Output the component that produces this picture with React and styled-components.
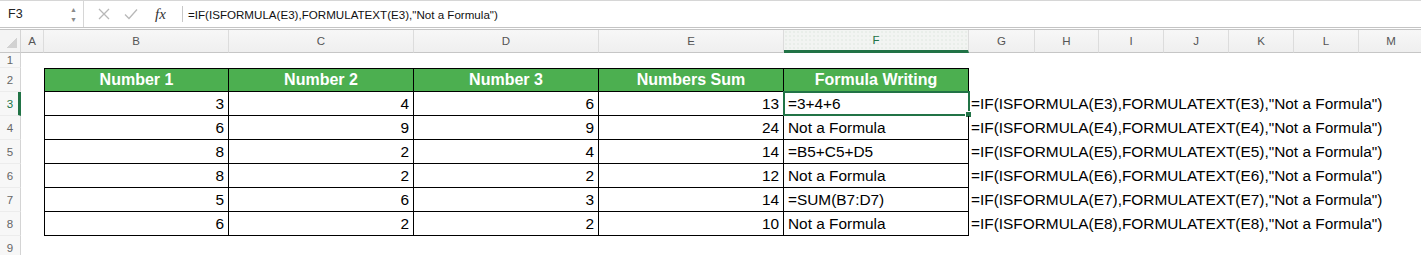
import React from 'react';
import styled, { createGlobalStyle, css } from 'styled-components';

const GlobalStyle = createGlobalStyle`
  html, body { margin: 0; padding: 0; background: #fff; }
  body { font-family: "Liberation Sans", Arial, sans-serif; overflow: hidden; }
`;

const GREEN = '#4caf50';
const SEL = '#217346';

const Page = styled.div`
  width: 1421px;
  height: 255px;
  overflow: hidden;
  background: #fff;
`;

const FormulaBar = styled.div`
  height: 30px;
  display: flex;
  align-items: center;
  border-top: 1px solid #d6d6d6;
  border-bottom: 3px double #c4c4c4;
  background: #fff;
  box-sizing: border-box;
`;

const NameBox = styled.div`
  width: 84px;
  height: 100%;
  display: flex;
  align-items: center;
  justify-content: space-between;
  padding: 0 6px 0 8px;
  box-sizing: border-box;
  border-right: 1px solid #d6d6d6;
  font-size: 12.5px;
  color: #222;
`;

const Stepper = styled.div`
  display: flex;
  flex-direction: column;
  gap: 3px;
  color: #8a8a8a;
  font-size: 7px;
  line-height: 7px;
`;

const Actions = styled.div`
  width: 98px;
  height: 100%;
  display: flex;
  align-items: center;
  padding-left: 14px;
  gap: 14px;
  box-sizing: border-box;
`;

const Fx = styled.span`
  font-family: "Liberation Serif", "Times New Roman", serif;
  font-style: italic;
  font-size: 15px;
  color: #333;
  margin-left: 3px;
`;

const Divider = styled.div`
  width: 1px;
  height: 16px;
  background: #c8c8c8;
`;

const FormulaText = styled.div`
  padding-left: 5px;
  font-size: 11.6px;
  color: #111;
  white-space: nowrap;
`;

const Sheet = styled.div`
  display: grid;
  grid-template-columns: 21px 23px 185px 185px 185px 185px 185px 66px 64px 65px 65px 65px 65px 65px;
  grid-template-rows: 23px 15px repeat(7, 24px) 24px;
`;

const Corner = styled.div`
  background:
    linear-gradient(135deg, transparent 55%, #d2d2d2 55%) no-repeat 5px 6px / 12px 12px,
    #f4f4f4;
  border-right: 1px solid #d4d4d4;
  border-bottom: 1px solid #c6c6c6;
  box-sizing: border-box;
`;

const ColHead = styled.div`
  display: flex;
  align-items: center;
  justify-content: center;
  font-size: 11.5px;
  color: #555;
  background: linear-gradient(#f7f7f7, #efefef);
  border-right: 1px solid #dcdcdc;
  border-bottom: 1px solid #c6c6c6;
  box-sizing: border-box;
  ${p => p.active && css`
    color: ${SEL};
    background: radial-gradient(#dde6de 0.6px, transparent 0.8px) 0 0 / 4px 4px, #f2f4f2;
    border-bottom: 3px solid ${SEL};
  `}
`;

const RowHead = styled.div`
  display: flex;
  align-items: center;
  justify-content: center;
  font-size: 11.5px;
  color: #666;
  background: #f7f7f7;
  border-right: 1px solid #d4d4d4;
  border-bottom: 1px solid #ececec;
  box-sizing: border-box;
  ${p => p.active && css`
    color: ${SEL};
    border-right: 3px solid ${SEL};
    padding-left: 2px;
  `}
`;

const Cell = styled.div`
  position: relative;
  display: flex;
  align-items: center;
  box-sizing: border-box;
  font-size: 15.4px;
  color: #000;
  white-space: nowrap;
  padding: 0 4px;
  justify-content: ${p => (p.right ? 'flex-end' : 'flex-start')};
  ${p => p.boxed && css`
    border-right: 1px solid #000;
    border-bottom: 1px solid #000;
  `}
  ${p => p.first && css`border-left: 1px solid #000;`}
  ${p => p.top && css`border-top: 1px solid #000;`}
  ${p => p.overflow && css`overflow: visible; padding-left: 2px;`}
`;

const HeadCell = styled(Cell)`
  background: ${GREEN};
  color: #fff;
  font-weight: bold;
  font-size: 16px;
  justify-content: center;
`;

const Selection = styled.div`
  position: absolute;
  left: -1px;
  top: -1px;
  right: -2px;
  bottom: -1px;
  border: 2px solid ${SEL};
  pointer-events: none;
  &::after {
    content: '';
    position: absolute;
    right: -4px;
    bottom: -4px;
    width: 5px;
    height: 5px;
    background: ${SEL};
    border: 1px solid #fff;
  }
`;

const cols = ['A', 'B', 'C', 'D', 'E', 'F', 'G', 'H', 'I', 'J', 'K', 'L', 'M'];
const heads = ['Number 1', 'Number 2', 'Number 3', 'Numbers Sum', 'Formula Writing'];
const rows = [
  [3, 4, 6, 13, '=3+4+6'],
  [6, 9, 9, 24, 'Not a Formula'],
  [8, 2, 4, 14, '=B5+C5+D5'],
  [8, 2, 2, 12, 'Not a Formula'],
  [5, 6, 3, 14, '=SUM(B7:D7)'],
  [6, 2, 2, 10, 'Not a Formula'],
];

const formula = r => `=IF(ISFORMULA(E${r}),FORMULATEXT(E${r}),"Not a Formula")`;

const Blank = ({ n }) => Array.from({ length: n }, (_, i) => <Cell key={'b' + i} />);

export default function App() {
  return (
    <Page>
      <GlobalStyle />
      <FormulaBar>
        <NameBox>
          <span>F3</span>
          <Stepper><span>▲</span><span>▼</span></Stepper>
        </NameBox>
        <Actions>
          <svg width="12" height="12" viewBox="0 0 12 12"><path d="M1 1L11 11M11 1L1 11" stroke="#b8b8b8" strokeWidth="1.3" /></svg>
          <svg width="14" height="12" viewBox="0 0 14 12"><path d="M1 6.5L5 10.5L13 1.5" stroke="#b8b8b8" strokeWidth="1.3" fill="none" /></svg>
          <Fx>fx</Fx>
        </Actions>
        <Divider />
        <FormulaText>{formula(3)}</FormulaText>
      </FormulaBar>
      <Sheet>
        <Corner />
        {cols.map(c => <ColHead key={c} active={c === 'F'}>{c}</ColHead>)}

        <RowHead>1</RowHead>
        <Blank n={13} />

        <RowHead>2</RowHead>
        <Cell />
        {heads.map((h, i) => (
          <HeadCell key={h} boxed top first={i === 0}>{h}</HeadCell>
        ))}
        <Blank n={7} />

        {rows.map((r, ri) => {
          const rn = ri + 3;
          return (
            <React.Fragment key={rn}>
              <RowHead active={rn === 3}>{rn}</RowHead>
              <Cell />
              {r.slice(0, 4).map((v, i) => (
                <Cell key={i} boxed right first={i === 0}>{v}</Cell>
              ))}
              <Cell boxed>
                {r[4]}
                {rn === 3 && <Selection />}
              </Cell>
              <Cell overflow>{formula(rn)}</Cell>
              <Blank n={6} />
            </React.Fragment>
          );
        })}

        <RowHead>9</RowHead>
        <Blank n={13} />
      </Sheet>
    </Page>
  );
}
